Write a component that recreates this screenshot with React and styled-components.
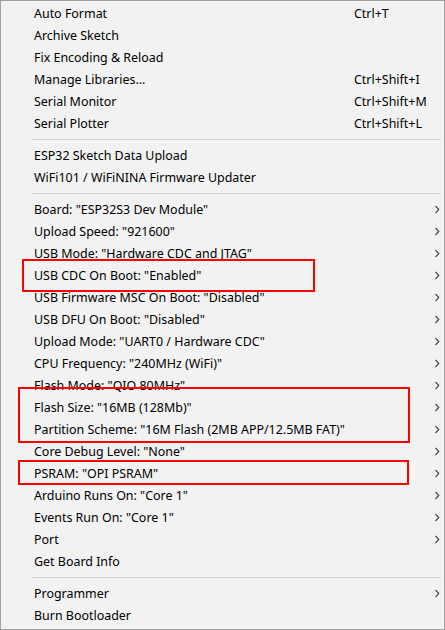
import React from "react";
import styled, { createGlobalStyle } from "styled-components";

const Global = createGlobalStyle`
  html, body { margin: 0; padding: 0; background: #f2f2f2; }
  body { font-family: "Noto Sans", "Noto Sans CJK SC", sans-serif; }
`;

const Menu = styled.div`
  position: relative;
  box-sizing: border-box;
  width: 445px;
  height: 630px;
  border: 1px solid #a0a0a0;
  background: #f2f2f2;
  padding: 2px 0;
  display: flex;
  flex-direction: column;
`;

const Row = styled.div`
  display: grid;
  grid-template-columns: 320px 1fr 8px;
  align-items: center;
  height: 22px;
  padding: 0 3px 1px 33px;
  box-sizing: border-box;
  font-size: 12.45px;
  color: #000;
  white-space: nowrap;
`;

const Label = styled.span`
  overflow: visible;
`;

const Shortcut = styled.span`
  letter-spacing: 0;
`;

const Arrow = styled.span`
  display: flex;
  align-items: center;
`;

const Sep = styled.div`
  height: 1px;
  margin: 4px 3px 5px 30px;
  background: #d7d7d7;
`;

const Mark = styled.div`
  position: absolute;
  box-sizing: border-box;
  border: 2px solid #f00;
  left: ${(p) => p.$l}px;
  top: ${(p) => p.$t}px;
  width: ${(p) => p.$w}px;
  height: ${(p) => p.$h}px;
  pointer-events: none;
`;

const Chevron = () => (
  <svg width="8" height="9" viewBox="0 0 8 9" style={{ display: "block" }}>
    <polyline points="2.5,1 5.8,4.5 2.5,8" fill="none" stroke="#444" strokeWidth="1.1" />
  </svg>
);

const sections = [
  [
    ["Auto Format", "Ctrl+T"],
    ["Archive Sketch"],
    ["Fix Encoding & Reload"],
    ["Manage Libraries...", "Ctrl+Shift+I"],
    ["Serial Monitor", "Ctrl+Shift+M"],
    ["Serial Plotter", "Ctrl+Shift+L"],
  ],
  [["ESP32 Sketch Data Upload"], ["WiFi101 / WiFiNINA Firmware Updater"]],
  [
    ['Board: "ESP32S3 Dev Module"', null, true],
    ['Upload Speed: "921600"', null, true],
    ['USB Mode: "Hardware CDC and JTAG"', null, true],
    ['USB CDC On Boot: "Enabled"', null, true],
    ['USB Firmware MSC On Boot: "Disabled"', null, true],
    ['USB DFU On Boot: "Disabled"', null, true],
    ['Upload Mode: "UART0 / Hardware CDC"', null, true],
    ['CPU Frequency: "240MHz (WiFi)"', null, true],
    ['Flash Mode: "QIO 80MHz"', null, true],
    ['Flash Size: "16MB (128Mb)"', null, true],
    ['Partition Scheme: "16M Flash (2MB APP/12.5MB FAT)"', null, true],
    ['Core Debug Level: "None"', null, true],
    ['PSRAM: "OPI PSRAM"', null, true],
    ['Arduino Runs On: "Core 1"', null, true],
    ['Events Run On: "Core 1"', null, true],
    ["Port", null, true],
    ["Get Board Info"],
  ],
  [["Programmer", null, true], ["Burn Bootloader"]],
];

export default function App() {
  return (
    <>
      <Global />
      <Menu>
        {sections.map((items, si) => (
          <React.Fragment key={si}>
            {si > 0 && <Sep />}
            {items.map(([label, shortcut, sub]) => (
              <Row key={label}>
                <Label>{label}</Label>
                <Shortcut>{shortcut || ""}</Shortcut>
                <Arrow>{sub ? <Chevron /> : null}</Arrow>
              </Row>
            ))}
          </React.Fragment>
        ))}
        <Mark $l={21} $t={258} $w={293} $h={33} />
        <Mark $l={17} $t={386} $w={392} $h={56} />
        <Mark $l={17} $t={459} $w={391} $h={25} />
      </Menu>
    </>
  );
}
